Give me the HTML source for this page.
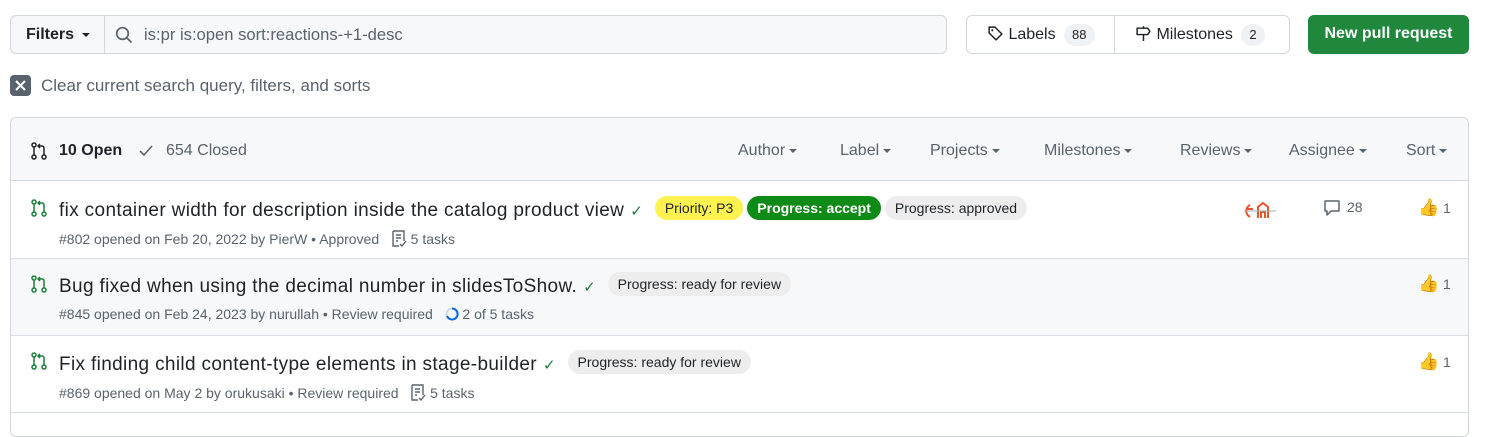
<!DOCTYPE html>
<html><head><style>
*{box-sizing:border-box;margin:0;padding:0}
body{width:1493px;height:423px;background:#fff;font-family:"Liberation Sans",sans-serif;color:#1f2328;position:relative;overflow:hidden}
.abs{position:absolute}
.btn{border:1px solid #d0d7de;background:#f6f8fa}
.caret{display:inline-block;width:0;height:0;border-left:4px solid transparent;border-right:4px solid transparent;border-top:4px solid currentColor;vertical-align:middle;margin-left:4px}
.hdr{position:absolute;top:142px;font-size:16px;color:#59636e}
.title{position:absolute;font-size:19px;letter-spacing:0.35px;color:#1f2328;white-space:nowrap}
.meta{position:absolute;font-size:14px;color:#59636e;white-space:nowrap}
.lbl{display:inline-block;font-size:14px;letter-spacing:0;font-weight:500;padding:0 10px;height:24px;line-height:24px;border-radius:12px;vertical-align:3px;margin-left:4px}
.cnt{display:inline-block;background:#eff2f5;border-radius:12px;font-size:13px;padding:0 8px;height:22px;line-height:22px;margin-left:4px;font-weight:normal}
.check{color:#1a7f37;font-size:15px;margin-left:6px}
</style></head><body>
<div class="abs btn" style="left:10px;top:15px;width:95px;height:39px;border-radius:6px 0 0 6px;font-size:16px;font-weight:bold;line-height:37px;padding-left:15px">Filters <span class="caret"></span></div>
<div class="abs" style="left:104px;top:15px;width:843px;height:39px;border:1px solid #d0d7de;border-radius:0 6px 6px 0;background:#f6f8fa">
<svg class="abs" style="left:10px;top:10px" width="18" height="18" viewBox="0 0 18 18"><circle cx="7.5" cy="7.5" r="5.8" fill="none" stroke="#59636e" stroke-width="1.7"/><path d="M12 12l4.5 4.5" stroke="#59636e" stroke-width="1.8"/></svg>
<span class="abs" style="left:39px;top:9px;font-size:16.6px;color:#59636e">is:pr is:open sort:reactions-+1-desc</span></div>
<div class="abs" style="left:966px;top:15px;width:324px;height:39px;border:1px solid #d0d7de;border-radius:6px;font-size:16px;font-weight:500">
<div class="abs" style="left:0;top:0;width:148px;height:37px;border-right:1px solid #d0d7de;padding:8px 0 0 20px">
<svg style="vertical-align:-3px" width="17" height="17" viewBox="0 0 16 16"><path d="M2 2h5.5l6.5 6.5-5.5 5.5L2 7.5z" fill="none" stroke="#1f2328" stroke-width="1.4" stroke-linejoin="round"/><circle cx="5" cy="5" r="1" fill="#1f2328"/></svg> Labels <span class="cnt">88</span></div>
<div class="abs" style="left:148px;top:0;height:37px;padding:8px 0 0 20px">
<svg style="vertical-align:-3px" width="17" height="17" viewBox="0 0 16 16"><path d="M8 1v2M8 9v6M2 3h10l2 3-2 3H2z" fill="none" stroke="#1f2328" stroke-width="1.4" stroke-linejoin="round"/></svg> Milestones <span class="cnt">2</span></div>
</div>
<div class="abs" style="left:1308px;top:15px;width:161px;height:39px;background:#1f883d;border-radius:6px;color:#fff;font-size:16px;font-weight:bold;text-align:center;line-height:38px">New pull request</div>
<div class="abs" style="left:10px;top:75px;width:21px;height:21px;background:#59636e;border-radius:4px"><svg width="21" height="21"><path d="M6 6l9 9M15 6l-9 9" stroke="#fff" stroke-width="2"/></svg></div>
<div class="abs" style="left:41px;top:76px;font-size:17px;color:#59636e">Clear current search query, filters, and sorts</div>
<div class="abs" style="left:10px;top:117px;width:1459px;height:320px;border:1px solid #d0d7de;border-radius:6px"></div>
<div class="abs" style="left:11px;top:118px;width:1457px;height:63px;background:#f6f8fa;border-bottom:1px solid #d0d7de;border-radius:6px 6px 0 0"></div>
<svg class="abs" style="left:31px;top:142px" width="16" height="18" viewBox="0 0 16 18"><circle cx="3" cy="3" r="2" fill="none" stroke="#1f2328" stroke-width="1.5"/><circle cx="3" cy="15" r="2" fill="none" stroke="#1f2328" stroke-width="1.5"/><circle cx="13" cy="15" r="2" fill="none" stroke="#1f2328" stroke-width="1.5"/><path d="M3 5v8M13 13V6a2 2 0 0 0-2-2H8M9 2L7 4l2 2" fill="none" stroke="#1f2328" stroke-width="1.5"/></svg>
<div class="abs" style="left:59px;top:142px;font-size:16px;font-weight:bold">10 Open</div>
<svg class="abs" style="left:138px;top:144px" width="16" height="14"><path d="M2 7l4 4 8-9" fill="none" stroke="#59636e" stroke-width="1.6"/></svg>
<div class="abs" style="left:166px;top:142px;font-size:16px;color:#59636e">654 Closed</div>
<div class="hdr" style="left:738px">Author<span class="caret"></span></div>
<div class="hdr" style="left:840px">Label<span class="caret"></span></div>
<div class="hdr" style="left:930px">Projects<span class="caret"></span></div>
<div class="hdr" style="left:1044px">Milestones<span class="caret"></span></div>
<div class="hdr" style="left:1180px">Reviews<span class="caret"></span></div>
<div class="hdr" style="left:1289px">Assignee<span class="caret"></span></div>
<div class="hdr" style="left:1406px">Sort<span class="caret"></span></div>

<div class="abs" style="left:11px;top:258px;width:1457px;height:78px;background:#f6f8fa;border-top:1px solid #d8dee4;border-bottom:1px solid #d8dee4"></div>
<div class="abs" style="left:11px;top:412px;width:1457px;height:1px;background:#d8dee4"></div>

<svg class="abs" style="left:31px;top:199px" width="16" height="18" viewBox="0 0 16 18"><g fill="none" stroke="#1a7f37" stroke-width="1.5"><circle cx="3" cy="3" r="2"/><circle cx="3" cy="15" r="2"/><circle cx="13" cy="15" r="2"/><path d="M3 5v8M13 13V6a2 2 0 0 0-2-2H8M9 2L7 4l2 2"/></g></svg>
<svg class="abs" style="left:31px;top:275px" width="16" height="18" viewBox="0 0 16 18"><g fill="none" stroke="#1a7f37" stroke-width="1.5"><circle cx="3" cy="3" r="2"/><circle cx="3" cy="15" r="2"/><circle cx="13" cy="15" r="2"/><path d="M3 5v8M13 13V6a2 2 0 0 0-2-2H8M9 2L7 4l2 2"/></g></svg>
<svg class="abs" style="left:31px;top:352px" width="16" height="18" viewBox="0 0 16 18"><g fill="none" stroke="#1a7f37" stroke-width="1.5"><circle cx="3" cy="3" r="2"/><circle cx="3" cy="15" r="2"/><circle cx="13" cy="15" r="2"/><path d="M3 5v8M13 13V6a2 2 0 0 0-2-2H8M9 2L7 4l2 2"/></g></svg>

<div class="title" style="left:59px;top:196px">fix container width for description inside the catalog product view<span class="check">✓</span>
<span class="lbl" style="background:#fef250;color:#1f2328;margin-left:6px">Priority: P3</span><span class="lbl" style="background:#0e8a16;color:#fff;font-weight:bold">Progress: accept</span><span class="lbl" style="background:#ededed;color:#1f2328">Progress: approved</span></div>
<div class="meta" style="left:59px;top:230px">#802 opened on Feb 20, 2022 by PierW • Approved &nbsp;&nbsp;<svg style="vertical-align:-4px" width="16" height="18"><path d="M2 1h11v10M2 1v15h6M5 5h5M5 8h5M5 11h2M9 14l2 2 4-5" fill="none" stroke="#59636e" stroke-width="1.4"/></svg> 5 tasks</div>
<svg class="abs" style="left:1242px;top:198px" width="36" height="22"><path d="M8 19c-5-3-5-9 0-12M4 11h7M16 20V9l5-4 5 4v11M19 20v-6h4v6" fill="none" stroke="#e8542d" stroke-width="2"/><path d="M2 13h32" stroke="#aaa" stroke-width="1"/></svg>
<svg class="abs" style="left:1323px;top:199px" width="18" height="17"><path d="M2 2h14v10H8l-4 4v-4H2z" fill="none" stroke="#59636e" stroke-width="1.5" stroke-linejoin="round"/></svg>
<div class="meta" style="left:1347px;top:199px;font-size:14px">28</div>

<div class="title" style="left:59px;top:272px">Bug fixed when using the decimal number in slidesToShow.<span class="check">✓</span>
<span class="lbl" style="background:#ededed;margin-left:6px">Progress: ready for review</span></div>
<div class="meta" style="left:59px;top:306px">#845 opened on Feb 24, 2023 by nurullah • Review required &nbsp;&nbsp;<svg style="vertical-align:-2px" width="14" height="14"><circle cx="7" cy="7" r="5.5" fill="none" stroke="#d0d7de" stroke-width="2"/><path d="M7 1.5a5.5 5.5 0 1 1-5 7.5" fill="none" stroke="#0969da" stroke-width="2"/></svg> 2 of 5 tasks</div>

<div class="title" style="left:59px;top:350px">Fix finding child content-type elements in stage-builder<span class="check">✓</span>
<span class="lbl" style="background:#ededed;margin-left:6px">Progress: ready for review</span></div>
<div class="meta" style="left:59px;top:384px">#869 opened on May 2 by orukusaki • Review required &nbsp;&nbsp;<svg style="vertical-align:-4px" width="16" height="18"><path d="M2 1h11v10M2 1v15h6M5 5h5M5 8h5M5 11h2M9 14l2 2 4-5" fill="none" stroke="#59636e" stroke-width="1.4"/></svg> 5 tasks</div>

<div class="abs" style="left:1418px;top:198px;font-size:17px">👍</div><div class="meta" style="left:1443px;top:200px">1</div>
<div class="abs" style="left:1418px;top:274px;font-size:17px">👍</div><div class="meta" style="left:1443px;top:276px">1</div>
<div class="abs" style="left:1418px;top:352px;font-size:17px">👍</div><div class="meta" style="left:1443px;top:354px">1</div>
</body></html>
